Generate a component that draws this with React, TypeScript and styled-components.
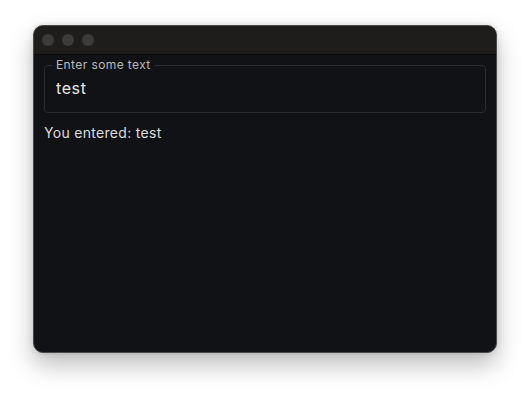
import React, { useState } from "react";
import styled, { createGlobalStyle } from "styled-components";

const Global = createGlobalStyle`
  html, body { margin: 0; padding: 0; background: #ffffff; }
  body { font-family: Inter, "Noto Sans", sans-serif; }
`;

const Stage = styled.div`
  width: 530px;
  height: 394px;
  padding: 25px 0 0 33px;
  box-sizing: border-box;
`;

const Window = styled.div`
  width: 464px;
  height: 328px;
  border-radius: 10px;
  background: #111216;
  border: 1px solid #4a4a4a;
  box-sizing: border-box;
  overflow: hidden;
  display: flex;
  flex-direction: column;
  box-shadow: 0 12px 24px rgba(0, 0, 0, 0.26), 0 0 6px rgba(0, 0, 0, 0.12);
`;

const TitleBar = styled.div`
  height: 28px;
  flex: none;
  background: #1f1d1c;
  border-bottom: 1px solid #0a0a0a;
  display: flex;
  align-items: center;
  gap: 8px;
  padding-left: 8px;
`;

const Dot = styled.span`
  width: 12px;
  height: 12px;
  border-radius: 50%;
  background: #3b3b3b;
`;

const Content = styled.div`
  padding: 3px 10px 0 10px;
  display: flex;
  flex-direction: column;
`;

const Field = styled.fieldset`
  margin: 0;
  border: 1px solid #2b2c30;
  border-radius: 4px;
  padding: 6px 11px 14px 11px;
`;

const Legend = styled.legend`
  padding: 0 4px;
  margin-left: -4px;
  font-size: 12px;
  letter-spacing: 0.4px;
  color: #b9b9bb;
  line-height: 14px;
`;

const Input = styled.input`
  display: block;
  background: transparent;
  border: none;
  outline: none;
  color: #e8e8e8;
  font-family: Inter, sans-serif;
  font-size: 16px;
  line-height: 20px;
  height: 20px;
  letter-spacing: 0.6px;
  padding: 0;
  margin: 0;
  width: 100%;
`;

const Output = styled.div`
  margin-top: 11px;
  font-size: 14px;
  line-height: 17px;
  letter-spacing: 0.3px;
  color: #dcdcdc;
`;

export default function App() {
  const [value, setValue] = useState("test");
  return (
    <Stage>
      <Global />
      <Window>
        <TitleBar>
          <Dot />
          <Dot />
          <Dot />
        </TitleBar>
        <Content>
          <Field>
            <Legend>Enter some text</Legend>
            <Input value={value} onChange={(e) => setValue(e.target.value)} />
          </Field>
          <Output>You entered: {value}</Output>
        </Content>
      </Window>
    </Stage>
  );
}
